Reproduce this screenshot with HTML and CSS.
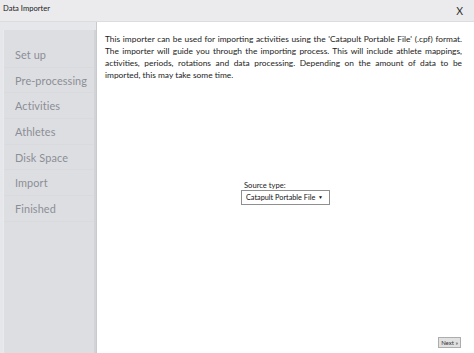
FILE: index.html
```html
<!DOCTYPE html>
<html lang="en">
<head>
<meta charset="UTF-8">
<meta name="viewport" content="width=device-width, initial-scale=1.0">
<title>Data Importer</title>
<link rel="stylesheet" href="styles.css">
</head>
<body>
    <div class="window">
        <div class="titlebar">
            <span class="title">Data Importer</span>
            <span class="close">X</span>
        </div>
        <div class="main">
            <div class="sidebar">
                <div class="steps">
                    <div class="step">Set up</div>
                    <div class="step">Pre-processing</div>
                    <div class="step">Activities</div>
                    <div class="step">Athletes</div>
                    <div class="step">Disk Space</div>
                    <div class="step">Import</div>
                    <div class="step">Finished</div>
                </div>
            </div>
            <div class="content">
                <p class="intro">This importer can be used for importing activities using the 'Catapult Portable File' (.cpf) format. The importer will guide you through the importing process. This will include athlete mappings, activities, periods, rotations and data processing. Depending on the amount of data to be imported, this may take some time.</p>
                <div class="source">
                    <label class="source-label">Source type:</label>
                    <div class="select">
                        <span>Catapult Portable File</span>
                        <span class="arrow">&#9660;</span>
                    </div>
                </div>
                <div class="footer">
                    <button class="next">Next &raquo;</button>
                </div>
            </div>
        </div>
    </div>
</body>
</html>
```

FILE: styles.css
```css
body {
    margin: 0;
    font-family: Lato, "Noto Sans", sans-serif;
    background: #ebebed;
}
.window {
    width: 474px;
    height: 353px;
    display: flex;
    flex-direction: column;
    overflow: hidden;
}
.titlebar {
    height: 22px;
    display: flex;
    justify-content: space-between;
    align-items: center;
    background: #ebebed;
    border-bottom: 1px solid #dcdcdf;
    box-sizing: border-box;
}
.title {
    font-size: 7.6px;
    color: #222;
    padding-left: 3px;
    margin-top: -6px;
}
.close {
    font-size: 10.5px;
    color: #333;
    padding-right: 11px;
    margin-top: 1px;
}
.main {
    flex: 1;
    display: flex;
}
.sidebar {
    width: 96px;
    background: #e6e7ea;
    padding: 8px 0 0 3px;
    box-sizing: border-box;
}
.steps {
    height: 100%;
    background: #dddee2;
    border-left: 1px solid #e9eaec;
    border-right: 2px solid #d2d3d7;
    padding-top: 12px;
    box-sizing: border-box;
}
.step {
    height: 25.7px;
    line-height: 25px;
    font-size: 10.9px;
    letter-spacing: 0.1px;
    color: #8b8e95;
    padding-left: 11px;
    border-bottom: 1px solid #d9dade;
    box-sizing: border-box;
    white-space: nowrap;
}
.content {
    flex: 1;
    background: #fff;
    border-left: 1px solid #c9cacd;
    display: flex;
    flex-direction: column;
    padding: 11px 12px 5px 8px;
}
.intro {
    margin: 0;
    font-size: 8.4px;
    line-height: 12px;
    color: #222;
    text-align: justify;
}
.source {
    margin: 99px 0 0 136px;
    display: flex;
    flex-direction: column;
    align-items: flex-start;
}
.source-label {
    font-size: 7.6px;
    color: #222;
    margin-left: 3px;
    line-height: 10px;
}
.select {
    width: 89px;
    height: 15px;
    border: 1px solid #8f8f8f;
    font-size: 7.3px;
    line-height: 13px;
    padding: 0 6px 0 4px;
    box-sizing: border-box;
    color: #111;
    white-space: nowrap;
    display: flex;
    justify-content: space-between;
}
.arrow {
    font-size: 5px;
}
.footer {
    margin-top: auto;
    display: flex;
    justify-content: flex-end;
}
.next {
    font-family: inherit;
    font-size: 6px;
    color: #333;
    background: #e1e1e1;
    border: 1px solid #adadad;
    padding: 0 2px;
    height: 11px;
    line-height: 9px;
    margin-right: 1px;
}
```
